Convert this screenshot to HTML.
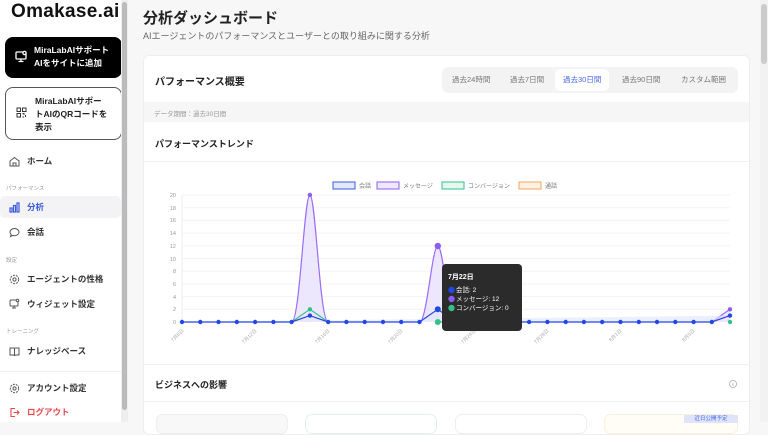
<!DOCTYPE html>
<html><head><meta charset="utf-8"><style>
*{box-sizing:border-box;margin:0;padding:0}
body{width:768px;height:422px;overflow:hidden;background:#f7f7f8;font-family:"Liberation Sans","Noto Sans CJK JP",sans-serif;color:#222;position:relative}
.sb{position:absolute;left:0;top:0;width:121px;height:422px;background:#fff}
.logo{position:absolute;left:11px;top:1px;font-size:19px;font-weight:700;letter-spacing:0.3px;color:#111}
.btn1{position:absolute;left:5px;top:37px;width:117px;height:41px;background:#000;border-radius:8px;color:#fff;font-size:8.5px;font-weight:700;line-height:13px;padding:7px 0 0 29px}
.btn2{position:absolute;left:5px;top:87px;width:117px;height:53px;background:#fff;border:1px solid #555;border-radius:8px;font-size:8.5px;font-weight:700;line-height:13px;padding:7px 0 0 29px;color:#222}
.ic{position:absolute}
.nav{position:absolute;left:0;width:121px;font-size:8.5px;font-weight:700;color:#333;padding-left:27px;height:22px;line-height:22px}
.sec{position:absolute;left:6px;font-size:5.5px;color:#999}
.scr{position:absolute;left:121px;top:0;width:7px;height:422px;background:#eee}
.scr div{position:absolute;left:1px;top:2px;width:5px;height:408px;background:#bbb;border-radius:3px}
.scr2{position:absolute;left:760px;top:0;width:8px;height:422px;background:#f2f2f2}
.scr2 div{position:absolute;left:1px;top:4px;width:6px;height:60px;background:#ccc;border-radius:3px}
h1{position:absolute;left:143px;top:7px;font-size:15px;font-weight:700;color:#222}
.sub{position:absolute;left:143px;top:29px;font-size:9px;color:#666}
.card{position:absolute;left:143px;top:55px;width:607px;height:380px;background:#fff;border:1px solid #eee;border-radius:6px}
.tabs{position:absolute;left:442px;top:67px;width:296px;height:26px;background:#f3f3f4;border-radius:6px;font-size:7.5px;color:#777}
.tabs span{position:absolute;top:7px}
.tabs .act{background:#fff;color:#4b68e6;border-radius:5px;top:2px;height:22px;line-height:22px;padding:0 8px}
</style></head><body>
<div class="sb">
<div class="logo">Omakase.ai</div>
<div class="btn1">MiraLabAIサポート<br>AIをサイトに追加
<svg class="ic" style="left:10px;top:13px" width="13" height="13" viewBox="0 0 13 13" fill="none" stroke="#fff" stroke-width="1.3"><rect x="1" y="2" width="10" height="7" rx="1"/><path d="M6 9v2M3.5 11.5h5"/><circle cx="9.5" cy="3" r="1.6" fill="#000"/></svg></div>
<div class="btn2">MiraLabAIサポー<br>トAIのQRコードを<br>表示
<svg class="ic" style="left:10px;top:19px" width="11" height="11" viewBox="0 0 11 11" fill="none" stroke="#333" stroke-width="1"><rect x="1" y="1" width="3.5" height="3.5"/><rect x="6.5" y="1" width="3.5" height="3.5"/><rect x="1" y="6.5" width="3.5" height="3.5"/><path d="M6.5 6.5h1.5v1.5M9.5 8v2M6.5 10h1.5"/></svg></div>
<svg class="ic" style="left:9px;top:156px" width="11" height="11" viewBox="0 0 11 11" fill="none" stroke="#555" stroke-width="1"><path d="M1 5L5.5 1.5 10 5v5H1z"/><path d="M4 10V7h3v3"/></svg>
<div class="nav" style="top:150px">ホーム</div>
<div class="sec" style="top:184px">パフォーマンス</div>
<div class="nav" style="top:196px;background:#f3f3f5;color:#3b5bdb;border-radius:5px">分析</div>
<svg class="ic" style="left:9px;top:202px" width="11" height="11" viewBox="0 0 11 11" fill="none" stroke="#3b5bdb" stroke-width="1.2"><rect x="1" y="6" width="2" height="4"/><rect x="4.5" y="3.5" width="2" height="6.5"/><rect x="8" y="1" width="2" height="9"/></svg>
<svg class="ic" style="left:9px;top:227px" width="11" height="11" viewBox="0 0 11 11" fill="none" stroke="#555" stroke-width="1"><path d="M5.5 1.5c2.5 0 4.5 1.6 4.5 3.6S8 8.7 5.5 8.7c-.6 0-1.2-.1-1.7-.3L1.5 9.5l.7-2C1.5 6.8 1 6 1 5.1 1 3.1 3 1.5 5.5 1.5z"/></svg>
<div class="nav" style="top:221px">会話</div>
<div class="sec" style="top:256px">設定</div>
<svg class="ic" style="left:9px;top:274px" width="11" height="11" viewBox="0 0 11 11" fill="none" stroke="#555" stroke-width="1"><circle cx="5.5" cy="5.5" r="4.2" stroke-dasharray="2 1"/><circle cx="5.5" cy="5.5" r="1.6"/></svg>
<div class="nav" style="top:268px">エージェントの性格</div>
<svg class="ic" style="left:9px;top:298px" width="11" height="11" viewBox="0 0 11 11" fill="none" stroke="#555" stroke-width="1"><rect x="1" y="2" width="8" height="6" rx="1"/><path d="M5 8v2M3 10h4"/><circle cx="8.5" cy="2.5" r="1.3" fill="#fff"/></svg>
<div class="nav" style="top:293px">ウィジェット設定</div>
<div class="sec" style="top:327px">トレーニング</div>
<svg class="ic" style="left:9px;top:346px" width="11" height="11" viewBox="0 0 11 11" fill="none" stroke="#555" stroke-width="1"><path d="M1 2h3.5c.6 0 1 .4 1 1v7c0-.5-.4-1-1-1H1zM10 2H6.5c-.6 0-1 .4-1 1v7c0-.5.4-1 1-1H10z"/></svg>
<div class="nav" style="top:340px">ナレッジベース</div>
<div style="position:absolute;left:0;top:371px;width:121px;border-top:1px solid #eee"></div>
<svg class="ic" style="left:9px;top:383px" width="11" height="11" viewBox="0 0 11 11" fill="none" stroke="#555" stroke-width="1"><circle cx="5.5" cy="5.5" r="4.2" stroke-dasharray="2 1"/><circle cx="5.5" cy="5.5" r="1.6"/></svg>
<div class="nav" style="top:377px">アカウント設定</div>
<svg class="ic" style="left:9px;top:407px" width="11" height="11" viewBox="0 0 11 11" fill="none" stroke="#e5484d" stroke-width="1.1"><path d="M6 1.5H2v8h4M4.5 5.5H10M8 3.5l2 2-2 2"/></svg>
<div class="nav" style="top:401px;color:#e5484d">ログアウト</div>
</div>
<div class="scr"><div></div></div>
<h1>分析ダッシュボード</h1>
<div class="sub">AIエージェントのパフォーマンスとユーザーとの取り組みに関する分析</div>
<div class="card"></div>
<div style="position:absolute;left:155px;top:73px;font-size:10px;font-weight:700">パフォーマンス概要</div>
<div class="tabs"><span style="left:10px">過去24時間</span><span style="left:68px">過去7日間</span><span class="act" style="left:113px">過去30日間</span><span style="left:180px">過去90日間</span><span style="left:239px">カスタム範囲</span></div>
<div style="position:absolute;left:144px;top:102px;width:605px;height:20px;background:#f6f6f7;font-size:6.5px;color:#999;padding:6px 0 0 10px">データ期間：過去30日間</div>
<div style="position:absolute;left:155px;top:137px;font-size:9px;font-weight:700">パフォーマンストレンド</div>
<div style="position:absolute;left:144px;top:161px;width:605px;border-top:1px solid #f0f0f0"></div>
<svg style="position:absolute;left:0;top:0" width="768" height="422" font-family="Liberation Sans,Noto Sans CJK JP,sans-serif">
<g font-size="6" fill="#777">
<rect x="333" y="182" width="22" height="7" fill="#e3e8fb" stroke="#3b5bdb"/><text x="359" y="188">会話</text>
<rect x="377" y="182" width="22" height="7" fill="#efe9fe" stroke="#8b5cf6"/><text x="403" y="188">メッセージ</text>
<rect x="442" y="182" width="22" height="7" fill="#e6f7ef" stroke="#34c08a"/><text x="468" y="188">コンバージョン</text>
<rect x="519" y="182" width="22" height="7" fill="#fff1e3" stroke="#f5a25d"/><text x="545" y="188">通話</text>
</g>
<g stroke="#f3f3f3" stroke-width="1">
<path d="M182 195H730M182 207.7H730M182 220.4H730M182 233.1H730M182 245.8H730M182 258.5H730M182 271.2H730M182 283.9H730M182 296.6H730M182 309.3H730"/>
</g>
<path d="M182 195V322" stroke="#eee"/>
<g font-size="5.5" fill="#999" text-anchor="end">
<text x="176" y="197">20</text><text x="176" y="210">18</text><text x="176" y="222">16</text><text x="176" y="235">14</text><text x="176" y="248">12</text><text x="176" y="261">10</text><text x="176" y="273">8</text><text x="176" y="286">6</text><text x="176" y="299">4</text><text x="176" y="311">2</text><text x="176" y="324">0</text>
</g>
<path d="M291.6 322C300 322 304 195 309.9 195S319.6 322 328.2 322ZM419.5 322C427 322 432 246 437.8 246S448 322 456 322ZM711.8 322L730 309.3V322Z" fill="#ede7fd"/>
<path d="M291.6 322C300 322 304 195 309.9 195S319.6 322 328.2 322M419.5 322C427 322 432 246 437.8 246S448 322 456 322M711.8 322L730 309.3" fill="none" stroke="#9a6cf7" stroke-width="1.2"/>
<path d="M291.6 322L309.9 309.3 328.2 322" fill="none" stroke="#34c08a" stroke-width="1.2"/>
<path d="M182 322H291.6L309.9 315.6 328.2 322H419.5L437.8 309.3 456 322H711.8L730 315.6" fill="#dfe5fb" fill-opacity=".6" stroke="#2546e6" stroke-width="1.2"/>
<path d="M437.8 322H456" stroke="#34c08a" stroke-width="1.2"/>
<g fill="#2546e6">
<circle cx="182" cy="322" r="2.2"/><circle cx="200.3" cy="322" r="2.2"/><circle cx="218.5" cy="322" r="2.2"/><circle cx="236.8" cy="322" r="2.2"/><circle cx="255.1" cy="322" r="2.2"/><circle cx="273.4" cy="322" r="2.2"/><circle cx="291.6" cy="322" r="2.2"/><circle cx="309.9" cy="315.6" r="2.2"/><circle cx="328.2" cy="322" r="2.2"/><circle cx="346.4" cy="322" r="2.2"/><circle cx="364.7" cy="322" r="2.2"/><circle cx="383" cy="322" r="2.2"/><circle cx="401.2" cy="322" r="2.2"/><circle cx="419.5" cy="322" r="2.2"/><circle cx="437.8" cy="309.3" r="3"/><circle cx="456.1" cy="322" r="2.2"/><circle cx="474.3" cy="322" r="2.2"/><circle cx="492.6" cy="322" r="2.2"/><circle cx="510.9" cy="322" r="2.2"/><circle cx="529.1" cy="322" r="2.2"/><circle cx="547.4" cy="322" r="2.2"/><circle cx="565.7" cy="322" r="2.2"/><circle cx="583.9" cy="322" r="2.2"/><circle cx="602.2" cy="322" r="2.2"/><circle cx="620.5" cy="322" r="2.2"/><circle cx="638.8" cy="322" r="2.2"/><circle cx="657" cy="322" r="2.2"/><circle cx="675.3" cy="322" r="2.2"/><circle cx="693.6" cy="322" r="2.2"/><circle cx="711.8" cy="322" r="2.2"/><circle cx="730" cy="315.6" r="2.2"/>
</g>
<circle cx="309.9" cy="195" r="2.2" fill="#8b5cf6"/><circle cx="437.8" cy="246" r="3.2" fill="#8b5cf6"/><circle cx="730" cy="309.3" r="2.2" fill="#8b5cf6"/>
<circle cx="309.9" cy="309.3" r="2.2" fill="#34c08a"/><circle cx="437.8" cy="322" r="3" fill="#34c08a"/><circle cx="730" cy="322" r="2.2" fill="#34c08a"/>
<g font-size="5" fill="#aaa" text-anchor="end">
<text transform="translate(184 331) rotate(-45)">7月8日</text>
<text transform="translate(257 331) rotate(-45)">7月12日</text>
<text transform="translate(330 331) rotate(-45)">7月16日</text>
<text transform="translate(403 331) rotate(-45)">7月20日</text>
<text transform="translate(476 331) rotate(-45)">7月24日</text>
<text transform="translate(549 331) rotate(-45)">7月28日</text>
<text transform="translate(622 331) rotate(-45)">8月1日</text>
<text transform="translate(695 331) rotate(-45)">8月5日</text>
</g>
<path d="M448 274L444 280 448 284Z" fill="#2b2b2b"/>
<rect x="442" y="264" width="80" height="67" rx="4" fill="#2b2b2b"/>
<text x="448" y="279" font-size="7" font-weight="700" fill="#fff">7月22日</text>
<g font-size="6.5" fill="#fff">
<circle cx="451.5" cy="290" r="3.2" fill="#2546e6"/><text x="456" y="292">会話: 2</text>
<circle cx="451.5" cy="299" r="3.2" fill="#8b5cf6"/><text x="456" y="301">メッセージ: 12</text>
<circle cx="451.5" cy="308" r="3.2" fill="#34c08a"/><text x="456" y="310">コンバージョン: 0</text>
</g>
<circle cx="733" cy="384" r="3.5" fill="none" stroke="#aaa" stroke-width=".8"/><path d="M733 383v3" stroke="#aaa" stroke-width=".8"/>
</svg>
<div style="position:absolute;left:144px;top:401px;width:605px;border-top:1px solid #f0f0f0"></div>
<div style="position:absolute;left:144px;top:364px;width:605px;border-top:1px solid #f0f0f0"></div>
<div style="position:absolute;left:155px;top:378px;font-size:9px;font-weight:700">ビジネスへの影響</div>
<div style="position:absolute;left:156px;top:414px;width:132px;height:20px;border:1px solid #eee;background:#f8f8f9;border-radius:7px"></div>
<div style="position:absolute;left:305px;top:414px;width:132px;height:20px;border:1px solid #e3f3ec;border-radius:7px"></div>
<div style="position:absolute;left:455px;top:414px;width:132px;height:20px;border:1px solid #eee;border-radius:7px"></div>
<div style="position:absolute;left:604px;top:414px;width:134px;height:20px;border:1px solid #f7f0dc;background:#fffdf5;border-radius:7px"></div>
<div style="position:absolute;left:684px;top:415px;width:54px;height:8px;background:#dde4fb;font-size:5.5px;color:#4b68e6;text-align:center;line-height:8px">近日公開予定</div>
<div class="scr2"><div></div></div>
</body></html>
